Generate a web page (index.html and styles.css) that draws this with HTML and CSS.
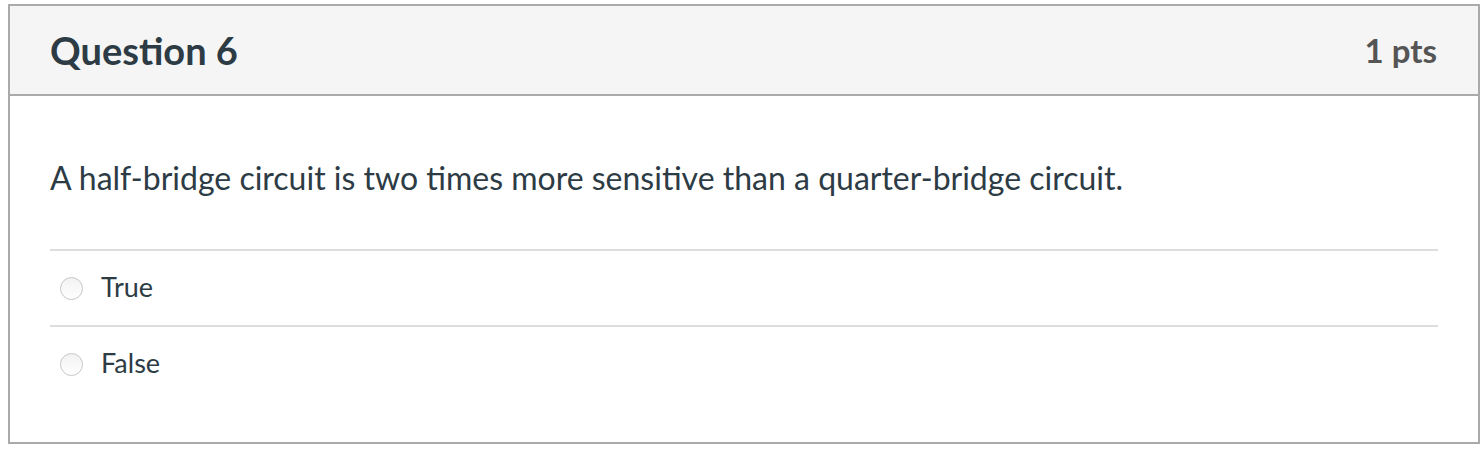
FILE: index.html
```html
<!DOCTYPE html>
<html>
<head>
<meta charset="utf-8">
<link rel="stylesheet" href="styles.css">
</head>
<body>
<div class="question">
  <div class="header">
    <h2 class="title">Question 6</h2>
    <div class="points">1 pts</div>
  </div>
  <div class="content">
    <p class="text">A half-bridge circuit is two times more sensitive than a quarter-bridge circuit.</p>
    <div class="answers">
      <label class="answer"><span class="radio"></span><span class="label">True</span></label>
      <label class="answer"><span class="radio"></span><span class="label">False</span></label>
    </div>
  </div>
</div>
</body>
</html>
```
FILE: styles.css
```css
html, body { margin: 0; padding: 0; background: #fff; }
body { padding: 4px 2px 0 8px; font-family: Lato, "Liberation Sans", sans-serif; color: #2d3b45; }
.question { border: 2px solid #aaaaaa; width: 1468px; height: 436px; box-sizing: content-box; }
.header { background: #f5f5f5; border-bottom: 2px solid #aaaaaa; height: 88px; display: flex; align-items: center; justify-content: space-between; padding: 0 41px 0 40px; }
.title { margin: 0; font-size: 38px; font-weight: 700; color: #2d3b45; }
.points { font-size: 33px; font-weight: 700; color: #555555; }
.content { padding: 0 40px 0 40px; }
.text { margin: 60px 0 0 0; font-size: 32px; line-height: 44px; }
.answers { margin-top: 49px; }
.answer { display: flex; align-items: center; height: 74px; border-top: 2px solid #dddddd; }
.radio { width: 23px; height: 23px; border-radius: 50%; border: 1px solid #c2c7cb; box-sizing: border-box; margin: 0 18px 0 10px; background: linear-gradient(#f2f2f2, #fff); }
.label { font-size: 27px; margin-bottom: 3px; }
```
